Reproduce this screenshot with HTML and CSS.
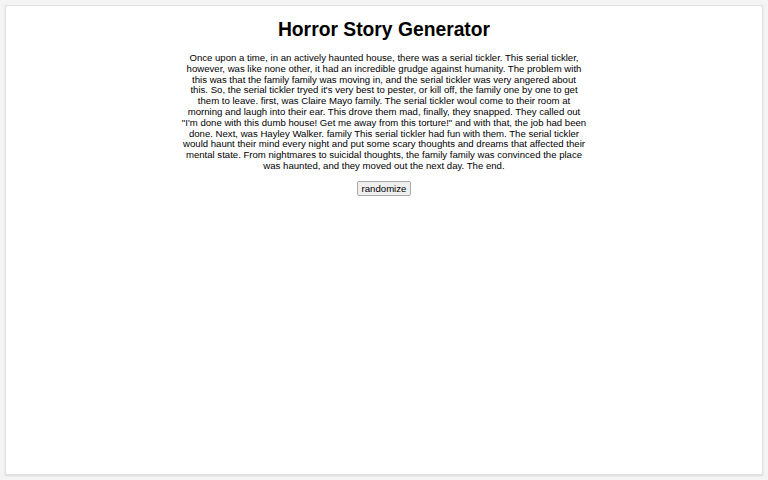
FILE: index.html
```html
<!DOCTYPE html>
<html lang="en">
<head>
    <meta charset="UTF-8">
    <meta name="viewport" content="width=device-width, initial-scale=1.0">
    <title>Horror Story Generator</title>
    <link rel="stylesheet" href="styles.css">
</head>
<body>
    <div class="page">
        <h1>Horror Story Generator</h1>
        <p class="story" id="story">Once upon a time, in an actively haunted house, there was a serial tickler. This serial tickler, however, was like none other, it had an incredible grudge against humanity. The problem with this was that the family family was moving in, and the serial tickler was very angered about this.&nbsp;So, the serial tickler tryed it's very best to pester, or kill off, the family one by one to get them to leave. first, was Claire Mayo family. The serial tickler woul come to their room at morning and laugh into their ear. This drove them mad, finally, they snapped. They called out "I'm done with this dumb house! Get me away from this torture!" and with that, the job had been done. Next, was Hayley Walker. family This serial tickler had fun with them. The serial tickler would haunt their mind every night and put some scary thoughts and dreams that affected their mental state. From nightmares to suicidal thoughts, the family family was convinced the place was haunted, and they moved out the next day. The end.</p>
        <button id="randomize" class="btn">randomize</button>
    </div>
</body>
</html>
```

FILE: styles.css
```css
html, body {
    height: 100%;
}
body {
    margin: 0;
    padding: 5px;
    box-sizing: border-box;
    background-color: #f4f4f4;
    font-family: "Liberation Sans", Arial, sans-serif;
    color: #000;
}
.page {
    height: 100%;
    box-sizing: border-box;
    background: #fff;
    border: 1px solid #e0e0e0;
    box-shadow: 0 1px 2px rgba(0, 0, 0, 0.1);
    display: flex;
    flex-direction: column;
    align-items: center;
    padding-top: 12px;
}
h1 {
    margin: 0;
    font-size: 19.3px;
    line-height: 23px;
}
.story {
    width: 406px;
    margin: 12px 0 0;
    font-size: 9.6px;
    line-height: 10.8px;
    text-align: center;
}
.btn {
    margin-top: 9px;
    font-family: "Liberation Sans", Arial, sans-serif;
    font-size: 9.6px;
    padding: 1px 4px;
    background: #efefef;
    border: 1px solid #aaa;
    border-radius: 2px;
    color: #000;
}
```
